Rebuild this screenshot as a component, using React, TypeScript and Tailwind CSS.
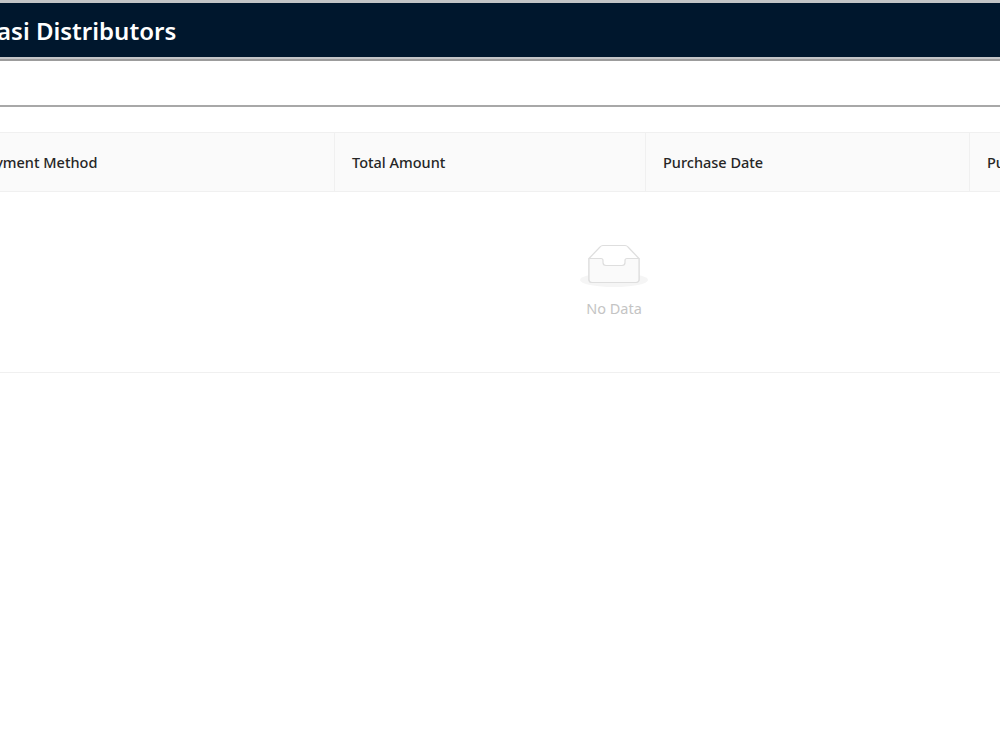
import React from 'react';

const columns = [
  { title: 'Payment Method', width: 'w-[374px]' },
  { title: 'Total Amount', width: 'w-[311px]' },
  { title: 'Purchase Date', width: 'w-[324px]' },
  { title: 'Purchase Status', width: 'w-[300px]' },
];

const EmptyIcon = () => (
  <svg width="68" height="46" viewBox="0 0 68 46" fill="none">
    <ellipse cx="34" cy="36" rx="34" ry="7" fill="#f5f5f5" />
    <path d="M9 14.5 L20 3 a4 4 0 0 1 3 -1.5 H45 a4 4 0 0 1 3 1.5 L59 14.5 V35.5 a3 3 0 0 1 -3 3 H12 a3 3 0 0 1 -3 -3 Z" fill="#fff" stroke="#dedede" strokeWidth="1.2" />
    <path d="M9 14.5 H21 a2 2 0 0 1 2 2 V18.5 a3 3 0 0 0 3 3 H42 a3 3 0 0 0 3 -3 V16.5 a2 2 0 0 1 2 -2 H59 V35.5 a3 3 0 0 1 -3 3 H12 a3 3 0 0 1 -3 -3 Z" fill="#fafafa" stroke="#dedede" strokeWidth="1.2" />
  </svg>
);

export default function App() {
  return (
    <div className="h-[750px] w-[1000px] overflow-hidden bg-white font-['Noto_Sans',sans-serif]">
      <div className="border-t-[3px] border-t-[#c2c4c6]">
        <div className="flex h-[54px] items-center bg-[#00172d] pt-[1px]">
          <h1 className="-ml-[45px] whitespace-nowrap text-[24px] font-semibold text-white">Lokasi Distributors</h1>
        </div>
        <div className="h-[4px] border-t-2 border-t-[#c4c6c8] bg-[#9c9c9c]" />
      </div>
      <div className="h-[46px] border-b-2 border-b-[#a8a8a8]" />
      <div className="mt-[25px] -ml-[39px] w-[1309px]">
        <div className="flex h-[60px] border-y border-y-[#f0f0f0] bg-[#fafafa]">
          {columns.map((col, i) => (
            <div
              key={col.title}
              className={`${col.width} flex items-center px-[17px] pt-[1px] text-[14.5px] font-medium text-[#262626] ${i < columns.length - 1 ? 'border-r border-r-[#f0f0f0]' : ''}`}
            >
              {col.title}
            </div>
          ))}
        </div>
      </div>
      <div className="flex h-[181px] flex-col items-center border-b border-b-[#f0f0f0] pt-[52px]">
        <div className="ml-[228px] flex flex-col items-center">
          <EmptyIcon />
          <span className="mt-[8px] text-[14.5px] text-[#c4c4c4]">No Data</span>
        </div>
      </div>
    </div>
  );
}
